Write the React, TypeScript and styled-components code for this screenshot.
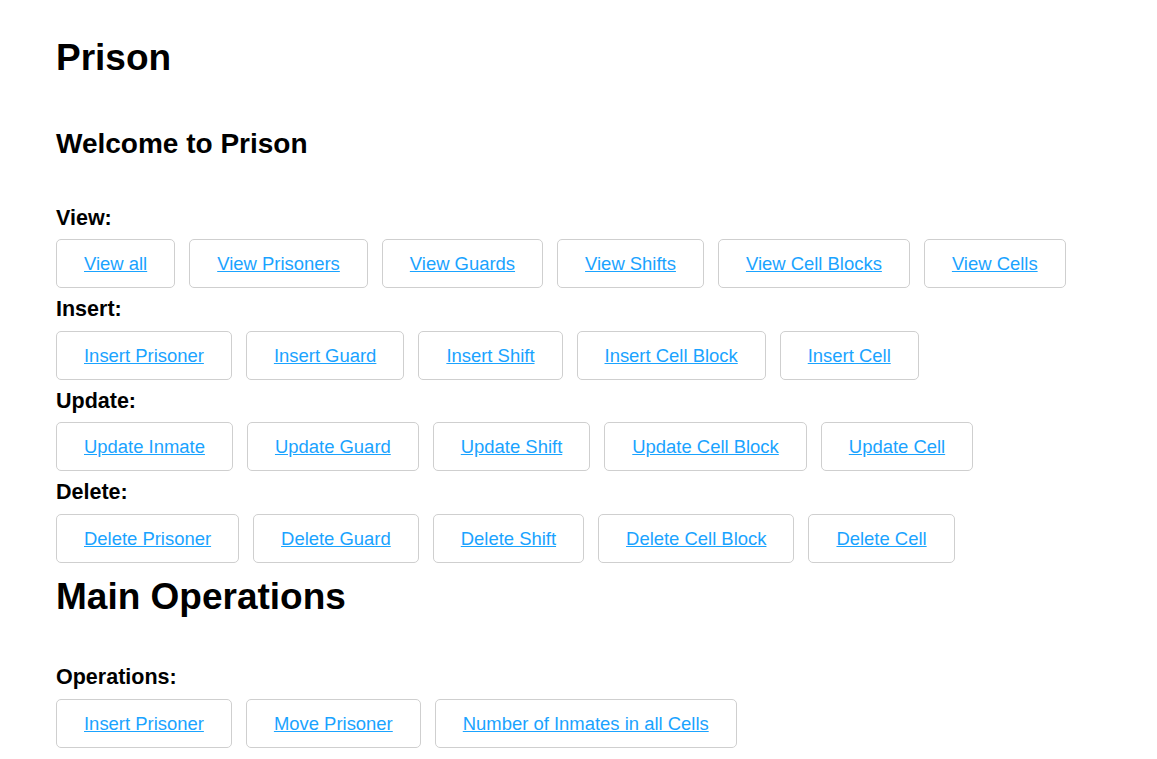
import styled, { createGlobalStyle } from 'styled-components'

const GlobalStyle = createGlobalStyle`
	body {
		margin: 0;
		background: #fff;
		font-family: 'Liberation Sans', Arial, sans-serif;
		color: #000;
	}
`

type Group = { label: string; links: string[] }

const adminGroups: Group[] = [
	{
		label: 'View:',
		links: [
			'View all',
			'View Prisoners',
			'View Guards',
			'View Shifts',
			'View Cell Blocks',
			'View Cells',
		],
	},
	{
		label: 'Insert:',
		links: [
			'Insert Prisoner',
			'Insert Guard',
			'Insert Shift',
			'Insert Cell Block',
			'Insert Cell',
		],
	},
	{
		label: 'Update:',
		links: [
			'Update Inmate',
			'Update Guard',
			'Update Shift',
			'Update Cell Block',
			'Update Cell',
		],
	},
	{
		label: 'Delete:',
		links: [
			'Delete Prisoner',
			'Delete Guard',
			'Delete Shift',
			'Delete Cell Block',
			'Delete Cell',
		],
	},
]

const operations: Group = {
	label: 'Operations:',
	links: ['Insert Prisoner', 'Move Prisoner', 'Number of Inmates in all Cells'],
}

const LinkGroup = ({ group }: { group: Group }) => (
	<>
		<GroupLabel>{group.label}</GroupLabel>
		<ButtonRow>
			{group.links.map(link => (
				<LinkButton key={link}>
					<NavLink href="#">{link}</NavLink>
				</LinkButton>
			))}
		</ButtonRow>
	</>
)

export default function App() {
	return (
		<>
			<GlobalStyle />
			<Page>
				<Title>Prison</Title>
				<Subtitle>Welcome to Prison</Subtitle>
				<Groups>
					{adminGroups.map(group => (
						<LinkGroup key={group.label} group={group} />
					))}
				</Groups>
				<SectionTitle>Main Operations</SectionTitle>
				<Groups $gapTop={37}>
					<LinkGroup group={operations} />
				</Groups>
			</Page>
		</>
	)
}

const Page = styled.div`
	padding: 36px 56px 0;
`

const Title = styled.h1`
	margin: 0;
	font-size: 37px;
	line-height: 44px;
	font-weight: 700;
`

const Subtitle = styled.h2`
	margin: 47px 0 0;
	font-size: 28px;
	line-height: 34px;
	font-weight: 700;
`

const SectionTitle = styled.h1`
	margin: 12.5px 0 0;
	font-size: 37px;
	line-height: 44px;
	font-weight: 700;
`

const Groups = styled.div<{ $gapTop?: number }>`
	margin-top: ${({ $gapTop }) => $gapTop ?? 35.5}px;
	display: flex;
	flex-direction: column;
	align-items: flex-start;
`

const GroupLabel = styled.div`
	margin: 9px 0 9.5px;
	font-size: 21.5px;
	line-height: 24px;
	font-weight: 700;
`

const ButtonRow = styled.div`
	display: flex;
	gap: 14px;
`

const LinkButton = styled.div`
	padding: 12px 27px 12px;
	border: 1px solid #cfcfcf;
	border-radius: 5px;
	background: #fff;
	font-size: 18.45px;
	line-height: 23px;
`

const NavLink = styled.a`
	color: #1aa3ff;
	text-decoration: underline;
	white-space: nowrap;
`
